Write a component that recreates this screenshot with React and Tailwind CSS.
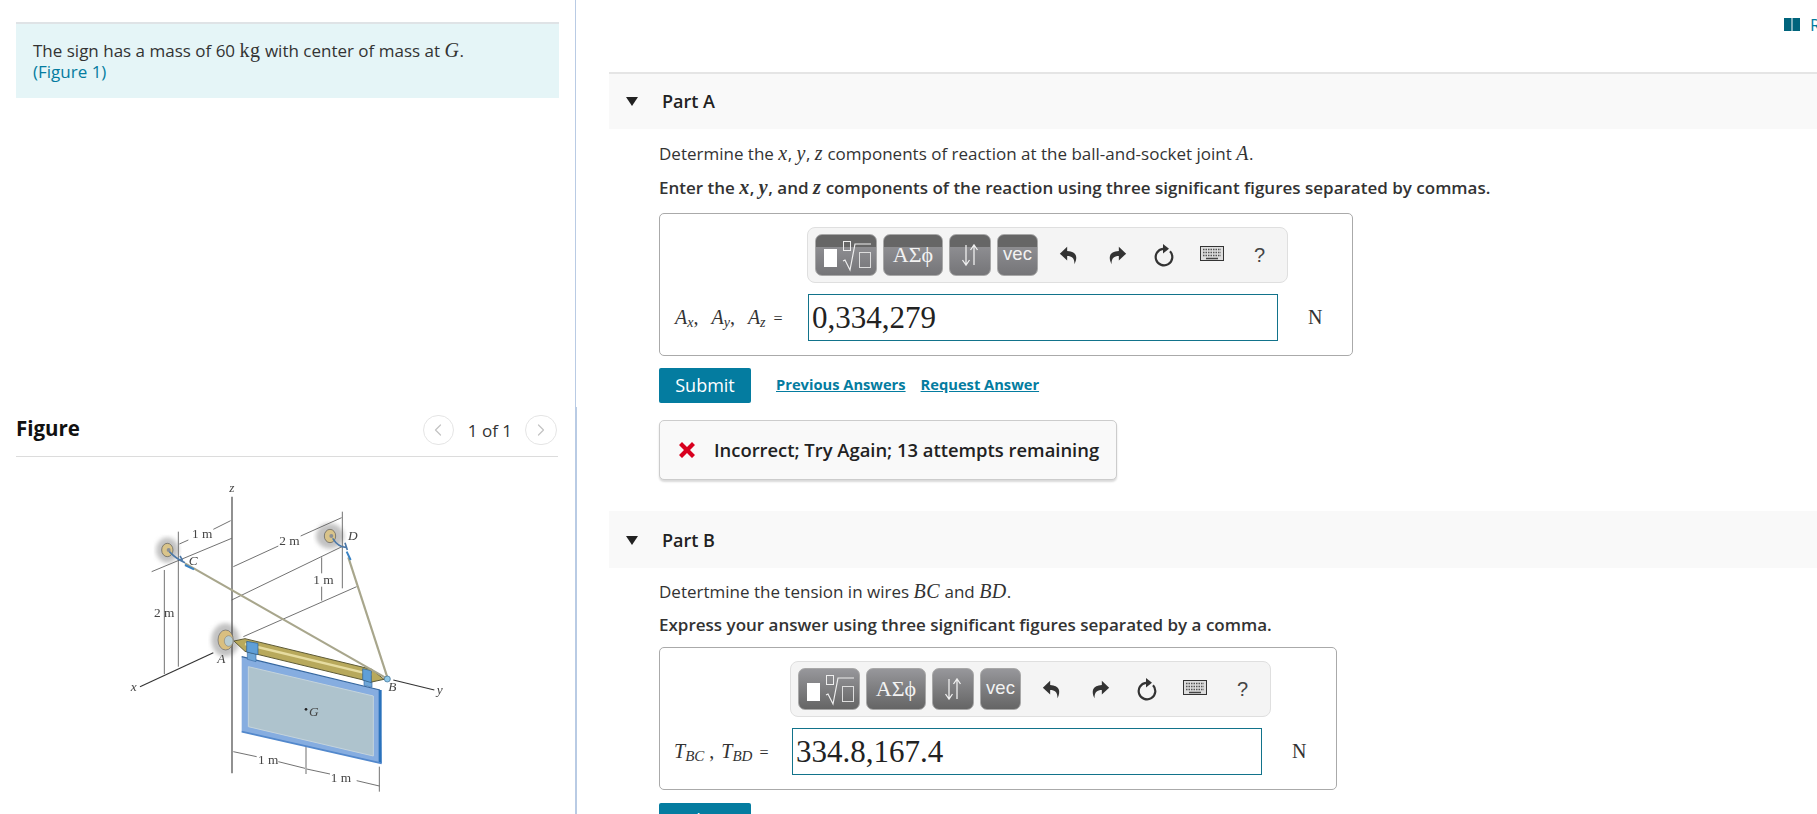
import React from 'react';
import { ChevronLeft, ChevronRight } from 'lucide-react';

const MATH = "font-['Liberation_Serif',serif]";

function M({ children, bold }) {
  return <span className={`${MATH} text-[20px] leading-none tracking-[0.5px] ${bold ? 'font-normal' : 'italic'}`}>{children}</span>;
}

function ToolButton({ band, className, children }) {
  return (
    <div
      className={`relative h-[42px] rounded-[7px] overflow-hidden border border-[#a8a8a8] text-[#f2f2f2] flex items-center justify-center ${className} ${
        band ? 'bg-gradient-to-b from-[#98989c] to-[#757578]' : 'bg-gradient-to-b from-[#97979b] to-[#656565]'
      }`}
    >
      {band && <div className="absolute left-0 right-0 top-0 h-[12px] bg-[#666666]" />}
      <div className="relative flex items-center justify-center">{children}</div>
    </div>
  );
}

function Toolbar({ band, className }) {
  return (
    <div className={`h-[56px] w-[481px] rounded-[8px] border border-[#dfdfdf] bg-[#f4f4f4] flex items-center pl-[7px] ${className}`}>
      <div className="flex gap-[6px]">
        <ToolButton band={band} className="w-[62px]">
          <svg width="62" height="42" viewBox="0 0 62 42" fill="none">
            <rect x="9" y="15" width="13" height="18" fill="#fff" />
            <rect x="28.5" y="7.5" width="7" height="9" stroke="#eee" />
            <path d="M28 27l2-1 5 10 5-26h16" stroke="#eee" strokeWidth="1.2" />
            <rect x="44.5" y="18.5" width="11" height="15" stroke="#ddd" />
          </svg>
        </ToolButton>
        <ToolButton band={band} className={`w-[60px] ${MATH} text-[22px]`}>AΣϕ</ToolButton>
        <ToolButton band={band} className="w-[42px]">
          <svg width="26" height="26" viewBox="0 0 26 26" fill="none" stroke="#eee" strokeWidth="1.3">
            <path d="M9 3v20M5.500 18l3.500 5 3.500-5" />
            <path d="M17 23V3M13.500 8l3.500-5 3.500 5" />
          </svg>
        </ToolButton>
        <ToolButton band={band} className="w-[41px] font-['Liberation_Sans',sans-serif] text-[18.5px] pb-[3px]">vec</ToolButton>
      </div>
      <div className="flex ml-[7px]">
        <div className="w-[47.7px] flex justify-center">
          <svg width="22" height="24" viewBox="0 0 24 24" fill="#333">
            <path d="M10 3L2 10.500 10 18v-5c5 0 8 2 8 9 4-8 2-14-8-14.500z" />
          </svg>
        </div>
        <div className="w-[47.7px] flex justify-center">
          <svg width="22" height="24" viewBox="0 0 24 24" fill="#333" className="scale-x-[-1]">
            <path d="M10 3L2 10.500 10 18v-5c5 0 8 2 8 9 4-8 2-14-8-14.500z" />
          </svg>
        </div>
        <div className="w-[47.7px] flex justify-center">
          <svg width="24" height="24" viewBox="0 0 24 24" fill="none">
            <path d="M11 5.800A8.300 8.300 0 1 0 18 8.300" stroke="#333" strokeWidth="2.200" />
            <path d="M11 1l6 4.800-6 4.700z" fill="#333" />
          </svg>
        </div>
        <div className="w-[47.7px] flex justify-center pt-[3px]">
          <svg width="24" height="15" viewBox="0 0 24 15" fill="none">
            <rect x="0.500" y="0.500" width="23" height="14" fill="#ddd" stroke="#333" />
            <path d="M3 3.500h18M3 6.500h18M3 9.500h18" stroke="#555" strokeWidth="1.500" strokeDasharray="1.500 1" />
            <path d="M6 12.500h12" stroke="#444" strokeWidth="1.500" />
          </svg>
        </div>
        <div className="w-[47.7px] flex justify-center text-[20px] text-[#444] font-['Liberation_Sans',sans-serif]">?</div>
      </div>
    </div>
  );
}

function AnswerBox({ band, boxClass, toolbarClass, labelClass, inputClass, label, value }) {
  return (
    <div className={`h-[143px] rounded-[5px] border border-[#aaaaaa] pt-[13px] ${boxClass}`}>
      <Toolbar band={band} className={toolbarClass} />
      <div className="flex items-center mt-[11px] pl-[14px]">
        <div className={`${labelClass} ${MATH} text-[#333] text-[20px] whitespace-nowrap`}>{label}</div>
        <div className={`h-[47px] border border-[#12738b] flex items-center pl-[3px] ${MATH} text-[31px] text-[#222] ${inputClass}`}>
          {value}
        </div>
        <div className={`ml-[30px] mb-[2px] ${MATH} text-[20px] text-[#333]`}>N</div>
      </div>
    </div>
  );
}

function PartHeader({ title, topBorder }) {
  return (
    <div className={`h-[57px] bg-[#f9f9f9] flex items-center pl-[17px] border-t-2 ${topBorder}`}>
      <div className="w-0 h-0 border-l-[6.500px] border-r-[6.500px] border-t-[9px] border-l-transparent border-r-transparent border-t-[#222]" />
      <div className="ml-[24px] mb-[2px] text-[18px] font-semibold text-[#222]">{title}</div>
    </div>
  );
}

function SubmitRow() {
  return (
    <div className="flex items-center">
      <button className="w-[92px] h-[35px] rounded-[2px] bg-[#047ca0] text-white text-[18px] leading-[33px]">Submit</button>
      <a className="ml-[25px] mb-[4px] text-[14.700px] font-bold text-[#047ca0] underline">Previous Answers</a>
      <a className="ml-[15px] mb-[4px] text-[14.700px] font-bold text-[#047ca0] underline">Request Answer</a>
    </div>
  );
}

function SignFigure() {
  const dim = { stroke: '#555', strokeWidth: 2.5, fill: 'none' };
  const lbl = { fontFamily: 'Liberation Serif, serif', fontSize: 40, fill: '#444' };
  const ital = { ...lbl, fontStyle: 'italic' };
  return (
    <svg width="320" height="344" viewBox="0 0 960 1032" className="block">
      <defs>
        <filter id="soft"><feGaussianBlur stdDeviation="1.800" /></filter>
        <filter id="halo"><feGaussianBlur stdDeviation="6" /></filter>
      </defs>
      <g filter="url(#soft)">
        {/* halos */}
        <ellipse cx="112" cy="240" rx="34" ry="38" fill="#c2c2c2" filter="url(#halo)" />
        <ellipse cx="600" cy="198" rx="42" ry="38" fill="#c2c2c2" filter="url(#halo)" />
        <ellipse cx="286" cy="510" rx="42" ry="50" fill="#c2c2c2" filter="url(#halo)" />

        {/* axes */}
        <path d="M306 80V910" stroke="#444" strokeWidth="3.500" />
        <path d="M30 650L250 548" stroke="#333" strokeWidth="3.500" />
        <path d="M790 630L913 660" stroke="#333" strokeWidth="3.500" />

        {/* dimension lines */}
        <path d="M65 305L305 205M148 222L175 210M250 178L302 152M145 185V590M103 300V612" {...dim} />
        <path d="M310 290L445 228M512 198L635 143M637 125V355M305 390L640 228M575 262V310M575 350V392M340 500L680 350" {...dim} />
        <path d="M310 845L380 860M445 875L525 895M530 897L600 912M680 932L748 948M748 890V965M528 825V912" {...dim} />
        <path d="M528 740V825" stroke="#333" strokeWidth="2.500" />

        {/* sign */}
        <path d="M335 560L750 660 755 880 335 785z" fill="#86ade0" />
        <path d="M355 590L730 678V858L355 770z" fill="#aec3cd" stroke="#c5d4dc" strokeWidth="3" />
        <path d="M746 660H755V880L746 878z" fill="#2a72bc" />
        <path d="M335 785L755 880" stroke="#5288cc" strokeWidth="5" />
        <path d="M335 560L750 660" stroke="#35669e" strokeWidth="3.500" />

        {/* hangers */}
        <path d="M352 530H378V575L352 568z" fill="#6ea6d8" stroke="#3c6ea8" strokeWidth="2" />
        <path d="M702 610H726V652L702 646z" fill="#6ea6d8" stroke="#3c6ea8" strokeWidth="2" />

        {/* rod */}
        <path d="M312 513L345 506 725 598 762 628 725 636 345 544z" fill="#b8a95c" stroke="#5d5a36" strokeWidth="3" />
        <path d="M345 522L725 614" stroke="#e6dca0" strokeWidth="7" />
        <path d="M350 514L384 520V554L350 546z" fill="#5f9fd8" stroke="#2c5c8c" strokeWidth="2" />
        <path d="M698 596L724 602V638L698 630z" fill="#5f9fd8" stroke="#2c5c8c" strokeWidth="2" />

        {/* wires */}
        <path d="M165 280L770 625" stroke="#a8a68c" strokeWidth="6.500" />
        <path d="M655 262L772 622" stroke="#a8a68c" strokeWidth="6.500" />
        <path d="M165 285L192 298M650 245L662 270" stroke="#3a83c4" strokeWidth="6" />

        {/* anchors */}
        <ellipse cx="112" cy="240" rx="17" ry="20" fill="#d9c48a" stroke="#555" strokeWidth="2" />
        <circle cx="116" cy="240" r="6" fill="#8a8f96" />
        <path d="M118 245Q140 268 165 278M150 258L158 272" stroke="#4c78a8" strokeWidth="5" fill="none" />
        <ellipse cx="600" cy="198" rx="17" ry="20" fill="#d9c48a" stroke="#555" strokeWidth="2" />
        <circle cx="604" cy="198" r="6" fill="#8a8f96" />
        <path d="M608 205Q625 232 648 232M645 218L652 240" stroke="#4c78a8" strokeWidth="5" fill="none" />
        <ellipse cx="287" cy="510" rx="23" ry="30" fill="#d9bf80" stroke="#666" strokeWidth="2" />
        <ellipse cx="296" cy="513" rx="13" ry="16" fill="#b9cdd2" stroke="#777" strokeWidth="1.500" />
        <circle cx="772" cy="627" r="9" fill="#8fc8e8" stroke="#33678f" strokeWidth="2" />
        <circle cx="528" cy="718" r="4" fill="#222" />

        {/* labels */}
        <text x="186" y="205" {...lbl}>1 m</text>
        <text x="448" y="225" {...lbl}>2 m</text>
        <text x="550" y="342" {...lbl}>1 m</text>
        <text x="72" y="442" {...lbl}>2 m</text>
        <text x="384" y="882" {...lbl}>1 m</text>
        <text x="602" y="935" {...lbl}>1 m</text>
        <text x="654" y="210" {...ital}>D</text>
        <text x="176" y="284" {...ital}>C</text>
        <text x="262" y="578" {...ital}>A</text>
        <text x="775" y="663" {...ital}>B</text>
        <text x="537" y="738" {...ital}>G</text>
        <text x="298" y="66" {...ital}>z</text>
        <text x="2" y="664" {...ital}>x</text>
        <text x="920" y="672" {...ital}>y</text>
      </g>
    </svg>
  );
}

export default function App() {
  return (
    <div className="w-[1817px] h-[814px] overflow-hidden bg-white flex font-['Open_Sans',sans-serif] text-[17px] leading-[24px] text-[#333]">
      {/* Left column */}
      <div className="w-[577px] shrink-0 flex flex-col">
        <div className="w-[576px] h-[407px] border-r border-[#b9cbe4] pt-[22px] pl-[16px] pr-[16px]">
          <div className="h-[76px] border-t-2 border-[#dfe3e6] bg-[#e5f5f7] pt-[16px] pl-[17px] leading-[21px]">
            <p>
              The sign has a mass of 60 <M bold>kg</M> with center of mass at <M>G</M>.
            </p>
            <a className="text-[#047ca0]">(Figure 1)</a>
          </div>
        </div>
        <div className="flex-1 border-r-2 border-[#b9cbe4] pl-[16px] pr-[17px]">
          <div className="h-[50px] border-b border-[#dcdcdc] flex items-center justify-between">
            <div className="mb-[8px] text-[20.500px] font-bold text-[#111]">Figure</div>
            <div className="flex items-center mb-[4px] mr-[1px]">
              <div className="w-[31px] h-[30px] rounded-full border border-[#e5e5e5] flex items-center justify-center">
                <ChevronLeft size={20} strokeWidth={1.500} className="text-[#c4c4c4]" />
              </div>
              <div className="ml-[14px] mr-[13px] mt-[3px] text-[#333]">1 of 1</div>
              <div className="w-[32px] h-[30px] rounded-full border border-[#e5e5e5] flex items-center justify-center">
                <ChevronRight size={20} strokeWidth={1.500} className="text-[#c4c4c4]" />
              </div>
            </div>
          </div>
          <div className="mt-[13px] ml-[114px]">
            <SignFigure />
          </div>
        </div>
      </div>

      {/* Right column */}
      <div className="flex-1 min-w-0 pl-[32px] pt-[72px] relative">
        <div className="absolute top-[18px] left-[1207px] flex items-center whitespace-nowrap text-[#047ca0]">
          <svg width="16" height="13" viewBox="0 0 16 13" fill="#00647c">
            <rect x="0" y="0" width="7.500" height="13" />
            <rect x="8.500" y="0" width="7.500" height="13" />
          </svg>
          <span className="ml-[10px] leading-[13px]">Review</span>
        </div>

        <PartHeader title="Part A" topBorder="border-[#e5e5e5]" />
        <div className="pl-[50px]">
          <p className="mt-[13px]">
            Determine the <M>x</M>, <M>y</M>, <M>z</M> components of reaction at the ball-and-socket joint <M>A</M>.
          </p>
          <p className="mt-[10px] font-semibold">
            Enter the <M>x</M>, <M>y</M>, and <M>z</M> components of the reaction using three significant figures separated by commas.
          </p>
          <div className="mt-[13px]">
            <AnswerBox
              band
              boxClass="w-[694px]"
              toolbarClass="ml-[147px]"
              labelClass="w-[134px] pl-[1px]"
              inputClass="w-[470px]"
              label={
                <>
                  <i>A<sub className="text-[14px]">x</sub></i>,
                  <i className="ml-[13px]">A<sub className="text-[14px]">y</sub></i>,
                  <i className="ml-[13px]">A<sub className="text-[14px]">z</sub></i>
                  <span className="ml-[8px] text-[16px]">=</span>
                </>
              }
              value="0,334,279"
            />
          </div>
          <div className="mt-[12px]">
            <SubmitRow />
          </div>
          <div className="mt-[17px] w-[458px] h-[60px] rounded-[5px] border border-[#cccccc] bg-[#f9f9f9] shadow-[0_2px_2px_rgba(0,0,0,0.15)] flex items-center pl-[18px]">
            <svg width="18" height="18" viewBox="0 0 18 18" fill="#d8001e">
              <path d="M1 4l3-3 5 5 5-5 3 3-5 5 5 5-3 3-5-5-5 5-3-3 5-5z" />
            </svg>
            <span className="ml-[18px] text-[18.400px] font-semibold text-[#222] whitespace-nowrap">Incorrect; Try Again; 13 attempts remaining</span>
          </div>
        </div>

        <div className="mt-[31px]">
          <PartHeader title="Part B" topBorder="border-transparent" />
        </div>
        <div className="pl-[50px]">
          <p className="mt-[12px]">
            Detertmine the tension in wires <M>BC</M> and <M>BD</M>.
          </p>
          <p className="mt-[9px] font-semibold">Express your answer using three significant figures separated by a comma.</p>
          <div className="mt-[10px]">
            <AnswerBox
              boxClass="w-[678px]"
              toolbarClass="ml-[130px]"
              labelClass="w-[118px]"
              inputClass="w-[470px]"
              label={
                <>
                  <i>T<sub className="text-[15px]">BC</sub></i> ,
                  <i className="ml-[7px]">T<sub className="text-[15px]">BD</sub></i>
                  <span className="ml-[7px] text-[16px]">=</span>
                </>
              }
              value="334.8,167.4"
            />
          </div>
          <div className="mt-[13px]">
            <SubmitRow />
          </div>
        </div>
      </div>
    </div>
  );
}
